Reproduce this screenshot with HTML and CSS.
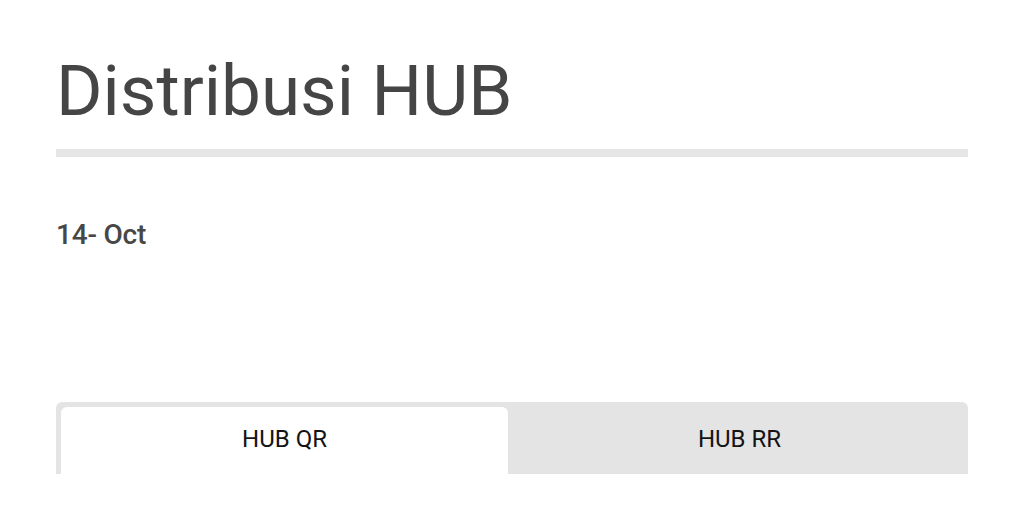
FILE: index.html
```html
<!DOCTYPE html>
<html lang="id">
<head>
<meta charset="utf-8">
<title>Distribusi HUB</title>
<link rel="stylesheet" href="styles.css">
</head>
<body>
<main class="page">
  <h1 class="title">Distribusi HUB</h1>
  <div class="rule"></div>
  <p class="date">14- Oct</p>
  <nav class="tabs">
    <div class="tab tab-active">HUB QR</div>
    <div class="tab">HUB RR</div>
  </nav>
</main>
</body>
</html>
```
FILE: styles.css
```css
* { box-sizing: border-box; }
html, body { margin: 0; padding: 0; background: #ffffff; }
body { font-family: Roboto, "Noto Sans", "Liberation Sans", sans-serif; }
.page {
  width: 1024px;
  padding: 49px 56px 0 56px;
}
.title {
  margin: 0;
  font-size: 71px;
  font-weight: 400;
  line-height: 84px;
  color: #454545;
  letter-spacing: 0;
}
.rule {
  margin-top: 16px;
  height: 8px;
  background: #e6e6e6;
}
.date {
  margin: 61px 0 0 0;
  font-size: 28px;
  font-weight: 500;
  line-height: 33px;
  color: #474747;
  letter-spacing: -0.2px;
}
.tabs {
  margin-top: 151px;
  display: flex;
  background: #e4e4e4;
  border-radius: 6px 6px 0 0;
  padding: 5px 0 0 5px;
}
.tab {
  height: 67px;
  padding-bottom: 4px;
  display: flex;
  align-items: center;
  justify-content: center;
  font-size: 24px;
  color: #141414;
  flex: 1 1 0;
}
.tab + .tab { padding-left: 3px; }
.tab-active {
  flex: 0 0 447px;
  background: #ffffff;
  border-radius: 6px 6px 0 0;
}
```
